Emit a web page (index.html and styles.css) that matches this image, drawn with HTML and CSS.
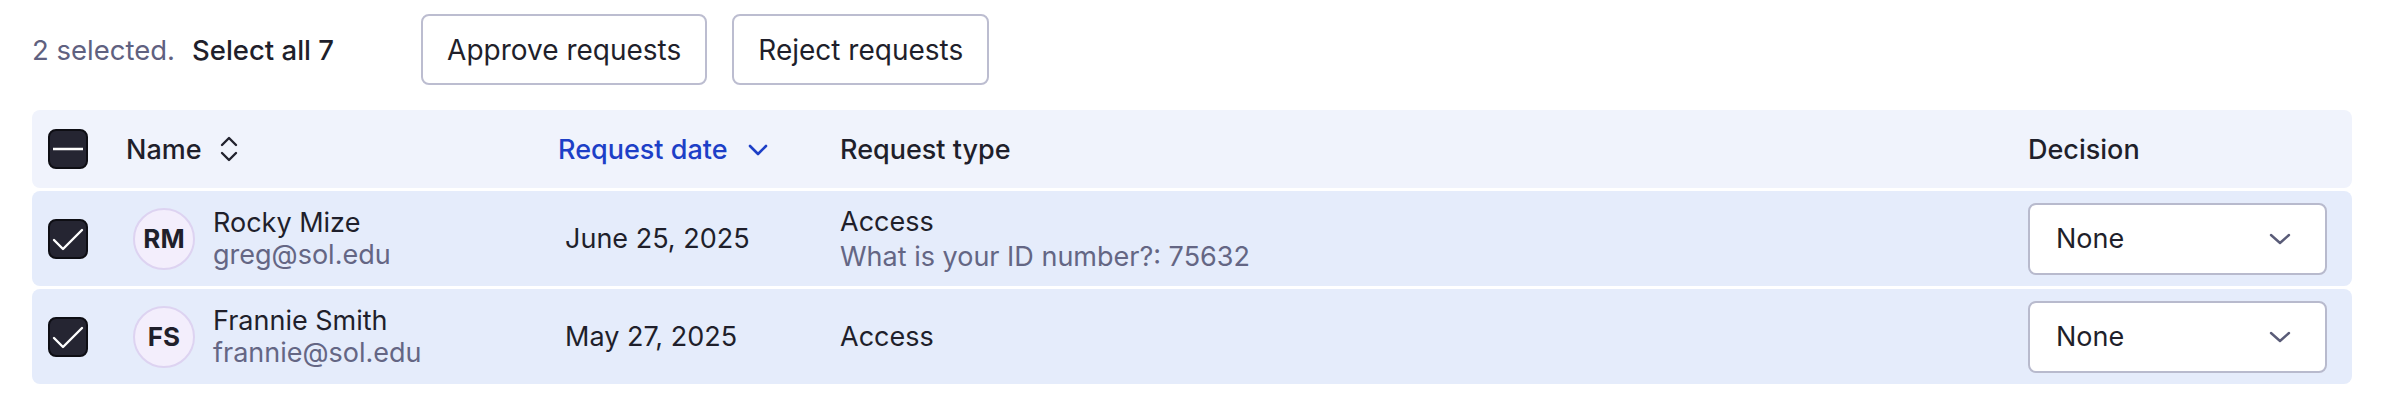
FILE: index.html
```html
<!DOCTYPE html>
<html lang="en">
<head>
<meta charset="utf-8">
<title>Requests</title>
<link rel="stylesheet" href="styles.css">
</head>
<body>
<div class="page">
  <div class="toolbar">
    <span class="count">2 selected.</span>
    <span class="select-all">Select all 7</span>
    <div class="actions">
      <button class="btn">Approve requests</button>
      <button class="btn">Reject requests</button>
    </div>
  </div>

  <div class="table">
    <div class="row head">
      <div class="cell c-check">
        <span class="cb"><svg viewBox="0 0 40 40" width="40" height="40"><path d="M5 20H35" stroke="#fff" stroke-width="2.5" fill="none"/></svg></span>
      </div>
      <div class="cell c-name">Name
        <svg class="sort-icon" viewBox="0 0 20 26" width="20" height="26"><path d="M3 9L10 2L17 9M3 17L10 24L17 17" stroke="#22222e" stroke-width="2.4" fill="none" stroke-linecap="round" stroke-linejoin="round"/></svg>
      </div>
      <div class="cell c-date active">Request date
        <svg class="date-icon" viewBox="0 0 20 12" width="20" height="12"><path d="M2 2L10 10L18 2" stroke="#1d3fc7" stroke-width="2.6" fill="none" stroke-linecap="round" stroke-linejoin="round"/></svg>
      </div>
      <div class="cell c-type">Request type</div>
      <div class="cell c-dec">Decision</div>
    </div>

    <div class="row body">
      <div class="cell c-check">
        <span class="cb"><svg viewBox="0 0 40 40" width="40" height="40"><path d="M6 21L15 30L34 11" stroke="#fff" stroke-width="2.4" fill="none" stroke-linecap="round" stroke-linejoin="round"/></svg></span>
      </div>
      <div class="cell c-name">
        <span class="avatar">RM</span>
        <div class="person">
          <div class="pname">Rocky Mize</div>
          <div class="pmail">greg@sol.edu</div>
        </div>
      </div>
      <div class="cell c-date">June 25, 2025</div>
      <div class="cell c-type">
        <div class="rtype">
          <div>Access</div>
          <div class="muted">What is your ID number?: 75632</div>
        </div>
      </div>
      <div class="cell c-dec">
        <div class="select">None
          <svg viewBox="0 0 22 12" width="22" height="12"><path d="M2 2L11 10L20 2" stroke="#5a5c78" stroke-width="2.4" fill="none" stroke-linecap="round" stroke-linejoin="round"/></svg>
        </div>
      </div>
    </div>

    <div class="row body">
      <div class="cell c-check">
        <span class="cb"><svg viewBox="0 0 40 40" width="40" height="40"><path d="M6 21L15 30L34 11" stroke="#fff" stroke-width="2.4" fill="none" stroke-linecap="round" stroke-linejoin="round"/></svg></span>
      </div>
      <div class="cell c-name">
        <span class="avatar">FS</span>
        <div class="person">
          <div class="pname">Frannie Smith</div>
          <div class="pmail">frannie@sol.edu</div>
        </div>
      </div>
      <div class="cell c-date">May 27, 2025</div>
      <div class="cell c-type">
        <div class="rtype">
          <div>Access</div>
        </div>
      </div>
      <div class="cell c-dec">
        <div class="select">None
          <svg viewBox="0 0 22 12" width="22" height="12"><path d="M2 2L11 10L20 2" stroke="#5a5c78" stroke-width="2.4" fill="none" stroke-linecap="round" stroke-linejoin="round"/></svg>
        </div>
      </div>
    </div>
  </div>
</div>
</body>
</html>
```

FILE: styles.css
```css
* { box-sizing: border-box; }
html, body { margin: 0; padding: 0; background: #ffffff; }
body {
  font-family: Inter, "Noto Sans", "Liberation Sans", sans-serif;
  font-size: 27px;
  color: #1f1f2b;
}
.page {
  padding: 14px 42px 0 32px;
}
.toolbar {
  display: flex;
  align-items: center;
  height: 71px;
  font-size: 27.5px;
}
.count { color: #5f6180; }
.select-all { margin-left: 17px; font-weight: 500; color: #1f1f2b; }
.actions { display: flex; gap: 25px; margin-left: 87px; }
.btn {
  height: 71px;
  padding: 0 24px;
  border: 2px solid #bcbdd0;
  border-radius: 8px;
  background: #ffffff;
  font-family: inherit;
  font-size: 28px;
  font-weight: 400;
  color: #1f1f2b;
}
.table {
  margin-top: 25px;
  display: flex;
  flex-direction: column;
  gap: 3px;
}
.row {
  display: grid;
  grid-template-columns: 94px 432px 282px 1fr 324px;
  align-items: center;
  border-radius: 8px;
}
.head { height: 78px; background: #f0f3fc; font-weight: 500; }
.body { height: 95px; background: #e5ecfb; }
.cell { display: flex; align-items: center; }
.c-check { padding-left: 16px; }
.cb {
  width: 40px; height: 40px;
  border-radius: 8px;
  background: #252532;
  border: 2px solid #0e0e14;
  display: flex; align-items: center; justify-content: center;
  overflow: hidden;
}
.cb svg { flex: none; }
.sort-icon { margin-left: 17px; }
.date-icon { margin-left: 20px; margin-top: 2px; }
.active { color: #1d3fc7; }
.body .c-name { padding-left: 7px; gap: 18px; }
.avatar {
  width: 62px; height: 62px;
  border-radius: 50%;
  background: #f3eefc;
  border: 2px solid #ddd3f1;
  display: flex; align-items: center; justify-content: center;
  font-weight: 700;
  font-size: 26px;
  color: #1f1f2b;
  flex: none;
}
.person { line-height: 32px; }
.pmail { color: #646684; }
.body .c-date { padding-left: 7px; }
.rtype { line-height: 35px; }
.muted { color: #646684; }
.select {
  width: 299px; height: 72px;
  background: #ffffff;
  border: 2px solid #b8bacd;
  border-radius: 8px;
  display: flex; align-items: center; justify-content: space-between;
  padding: 0 34px 0 26px;
}
```
